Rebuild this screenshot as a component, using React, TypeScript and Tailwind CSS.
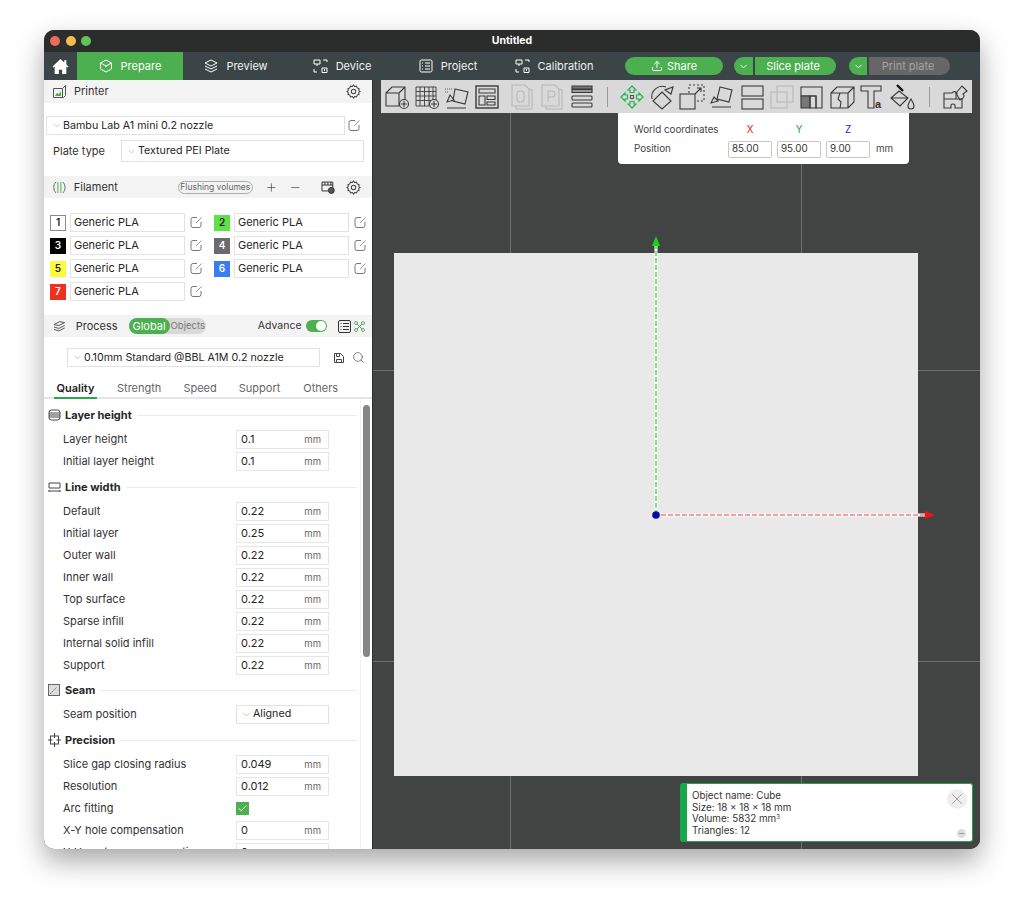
import React from 'react';
import { Search, Plus, Minus, ChevronDown, Upload, Check, X } from 'lucide-react';

const EditIcon = () => (
  <svg width="13" height="13" viewBox="0 0 13 13" fill="none" stroke="#777" strokeWidth="1" className="shrink-0">
    <path d="M7 1.5H3a2 2 0 0 0-2 2v6a2 2 0 0 0 2 2h6a2 2 0 0 0 2-2V6" />
    <path d="M6 7l5.5-5.5" stroke="#999" />
  </svg>
);

const GearIcon = () => (
  <svg width="15" height="15" viewBox="0 0 16 16" fill="none" stroke="#444" strokeWidth="1.1" className="shrink-0">
    <path d="M8 1l1.2 1.6 2-.3.8 1.9 1.9.8-.3 2L15 8l-1.4 1 .3 2-1.9.8-.8 1.9-2-.3L8 15l-1.2-1.6-2 .3-.8-1.9-1.9-.8.3-2L1 8l1.4-1-.3-2L4 4.2l.8-1.9 2 .3z" />
    <circle cx="8" cy="8" r="2.3" />
  </svg>
);

const Dropdown = ({ text, className }: { text: string; className: string }) => (
  <div className={`flex items-center border border-[#e2e2e2] bg-white text-[#262626] text-[10.7px] ${className}`}>
    <ChevronDown size={11} strokeWidth={1} color="#888" className="ml-[4px] mr-[1px] shrink-0" />
    <span className="pt-[1px]">{text}</span>
  </div>
);

const PanelHeader = ({ className, children }: { className?: string; children: React.ReactNode }) => (
  <div className={`flex items-center bg-[#f3f3f3] ${className ?? ''}`}>{children}</div>
);

const Filament = ({ n, swatch }: { n: number; swatch: string }) => (
  <div className="flex items-center w-[164px] h-[19px]">
    <div className={`w-[16px] h-[16px] flex items-center justify-center text-[10px] font-semibold shrink-0 ${swatch}`}>{n}</div>
    <div className="ml-[4px] w-[115px] h-[19px] border border-[#e2e2e2] flex items-center pl-[3px] text-[#262626]">Generic PLA</div>
    <div className="ml-[5px]"><EditIcon /></div>
  </div>
);

const Row = ({ label, value }: { label: string; value: string }) => (
  <div className="flex items-center h-[22px] pl-[19px] text-[#333]">
    <span className="w-[173px]">{label}</span>
    <div className="w-[93px] h-[19px] border border-[#e6e6e6] flex items-center justify-between pl-[4px] pr-[7px] text-[#262626]">
      <span>{value}</span>
      <span className="text-[9.5px] text-[#666] mt-[2px]">mm</span>
    </div>
  </div>
);

const Section = ({ icon, title, className }: { icon: React.ReactNode; title: string; className?: string }) => (
  <div className={`flex items-center h-[22px] pl-[4px] pr-[15px] ${className ?? ''}`}>
    <span className="w-[17px] shrink-0 flex">{icon}</span>
    <span className="font-bold text-[#262626]">{title}</span>
    <div className="flex-1 h-px bg-[#ececec] ml-[5px]" />
  </div>
);

const LayerIcon = () => (
  <svg width="13" height="12" viewBox="0 0 13 12" fill="none" stroke="#444" strokeWidth="1">
    <rect x="1" y="1" width="11" height="10" rx="2.5" />
    <path d="M1 4h11M1 6h11M1 8h11" />
  </svg>
);
const LineIcon = () => (
  <svg width="13" height="12" viewBox="0 0 13 12" fill="none" stroke="#444" strokeWidth="1">
    <path d="M1 2h11M1 7h11M1 2v5M12 2v5M1 9v2M12 9v2M1 10h11" />
  </svg>
);
const SeamIcon = () => (
  <svg width="12" height="12" viewBox="0 0 12 12" fill="#ddd" stroke="#666" strokeWidth="1">
    <rect x="0.5" y="0.5" width="11" height="11" />
    <path d="M2 10l7-7" strokeDasharray="1.5 1" />
  </svg>
);
const PrecisionIcon = () => (
  <svg width="13" height="14" viewBox="0 0 13 14" fill="none" stroke="#444" strokeWidth="1">
    <rect x="2.5" y="3" width="8" height="8" />
    <path d="M6.5 0v5M6.5 9v5M0 7h4.500M8.500 7H13" />
  </svg>
);

const ToolIcon = ({ className, faded, children }: { className?: string; faded?: boolean; children: React.ReactNode }) => (
  <div className={`w-[30px] h-[33px] flex items-center justify-center shrink-0 ${faded ? 'opacity-20' : ''} ${className ?? ''}`}>
    <svg width="26" height="26" viewBox="0 0 26 26" fill="none" stroke="#3a3a3a" strokeWidth="1.1">{children}</svg>
  </div>
);

const PlusBadge = ({ x, y }: { x: number; y: number }) => (
  <g>
    <circle cx={x} cy={y} r="4.5" fill="#d8d9d8" />
    <path d={`M${x - 3} ${y}h6M${x} ${y - 3}v6`} />
  </g>
);

const Toolbar = () => (
  <div className="flex items-center h-[33px] mx-[8px] bg-[#d8d9d8] pl-[1px]">
    <ToolIcon>
      <path d="M2 9l6-6h13v13l-6 6H2zM2 9h13v13M15 9l6-6" />
      <PlusBadge x={20} y={20} />
    </ToolIcon>
    <ToolIcon>
      <path d="M2 3h20v19H2zM2 7.500h20M2 12h20M2 16.500h20M6 3v19M10.500 3v19M15 3v19M19 3v19" strokeWidth="0.9" />
      <PlusBadge x={20} y={20} />
    </ToolIcon>
    <ToolIcon>
      <path d="M11 5l13 3-3 12-12-3zM3 24h19M6 11l-3 7 7-2z" />
      <path d="M1 5h7M1 8h4" strokeWidth="0.800" strokeDasharray="1 1" />
    </ToolIcon>
    <ToolIcon>
      <rect x="2" y="2" width="22" height="22" strokeWidth="1.400" />
      <path d="M5 5h16v4H5zM5 12h6v9H5zM13 12h8v3.500h-8zM13 18h8v3h-8z" />
    </ToolIcon>
    <ToolIcon className="ml-[5px]" faded>
      <path d="M3 1h13l4 4v17H3zM7 22v3h16V6l-3-1" />
      <rect x="8" y="7" width="7" height="11" rx="3" />
    </ToolIcon>
    <ToolIcon faded>
      <path d="M3 1h13l4 4v17H3zM7 22v3h16V6l-3-1" />
      <path d="M9 18V7h4a3 3 0 0 1 0 6H9" />
    </ToolIcon>
    <ToolIcon>
      <path d="M3 2h20v3H3z" fill="#777" />
      <path d="M3 5.500h20v3H3z" fill="#999" />
      <rect x="3" y="12" width="20" height="4" rx="1" />
      <rect x="3" y="19" width="20" height="4" rx="1" />
    </ToolIcon>
    <div className="w-[1px] h-[20px] bg-[#999] ml-[10px] mr-[9px]" />
    <ToolIcon>
      <g stroke="#1fb84f" strokeWidth="1.200">
        <path d="M13 2l4 4h-2v2.500h-4V6H9zM13 24l4-4h-2v-2.500h-4V20H9zM2 13l4-4v2h2.500v4H6v2zM24 13l-4-4v2h-2.500v4H20v2z" />
      </g>
      <rect x="11.500" y="11.500" width="3" height="3" stroke="#555" />
    </ToolIcon>
    <ToolIcon>
      <path d="M3 15A10.500 10.500 0 0 1 17 3" />
      <path d="M24 3l-2 7-6-4zM13 8l9 9-9 8-9-8z" />
    </ToolIcon>
    <ToolIcon>
      <path d="M10 9V1h15v16h-8" strokeDasharray="2 2" />
      <rect x="1" y="10" width="15" height="15" />
      <path d="M16 10l6-6M18 4h4v4" />
    </ToolIcon>
    <ToolIcon>
      <path d="M11 3l12 3-3 12-12-3zM3 23h19M5 13l-3 6 7-2z" />
    </ToolIcon>
    <ToolIcon>
      <rect x="3" y="2" width="21" height="10" />
      <rect x="3" y="15" width="21" height="10" />
    </ToolIcon>
    <ToolIcon faded>
      <rect x="2" y="8" width="16" height="16" />
      <rect x="8" y="2" width="16" height="16" />
    </ToolIcon>
    <ToolIcon>
      <path d="M2 3h21v21h-6V12H2z" />
      <path d="M2 12h9v12H2z" fill="#777" />
      <path d="M11 12h6v12h-6z" />
    </ToolIcon>
    <ToolIcon>
      <path d="M2 9l6-6h17v15l-6 6H2zM2 9h17v15M19 9l6-6M11 9l-2 6 3 3-1 6" />
    </ToolIcon>
    <ToolIcon>
      <path d="M2 2h20v5h-7v17H9V7H2z" />
      <text x="16" y="24" fontSize="11" fontWeight="700" fill="#333" stroke="none" fontFamily="Liberation Sans">a</text>
    </ToolIcon>
    <ToolIcon>
      <path d="M2 14l8-7 9 7-8 8zM2 14h17" />
      <path d="M8 1l6 6" strokeWidth="2.400" stroke="#111" />
      <path d="M22 15c-2 4-3 5-3 7a3 3 0 0 0 6 0c0-2-1-3-3-7z" />
    </ToolIcon>
    <div className="w-[1px] h-[20px] bg-[#999] ml-[12px] mr-[10px]" />
    <ToolIcon>
      <path d="M2 9h8a3 3 0 0 1 5 0h-1v6H2zM2 15v9h7v-3a2.500 2.500 0 0 1 4 0v3h7v-9h-6" />
      <path d="M14 9l6-7 5 5-4 3a2.500 2.500 0 0 1 0 4l-3 2z" />
    </ToolIcon>
  </div>
);

const Coord = ({ value }: { value: string }) => (
  <div className="h-[17px] border border-[#c8c8c8] rounded-[2px] flex items-center pl-[3px] text-[#333]">{value}</div>
);

const Tab = ({ label, active, icon }: { label: string; active?: boolean; icon: React.ReactNode }) => (
  <div className={`w-[106px] h-full flex items-center justify-center gap-[8px] text-[#f2f2f2] ${active ? 'bg-[#4caf50] text-white' : ''}`}>
    {icon}
    <span>{label}</span>
  </div>
);

const BoxIcon = () => (
  <svg width="14" height="14" viewBox="0 0 14 14" fill="none" stroke="#fff" strokeWidth="1">
    <path d="M7 1l5.500 3v6L7 13l-5.500-3V4zM1.500 4L7 7l5.500-3M7 7v1" />
  </svg>
);
const StackIcon = () => (
  <svg width="14" height="14" viewBox="0 0 14 14" fill="none" stroke="#fff" strokeWidth="1">
    <path d="M7 1l6 3-6 3-6-3zM1 7l6 3 6-3M1 10l6 3 6-3" />
  </svg>
);
const DeviceIcon = () => (
  <svg width="15" height="14" viewBox="0 0 15 14" fill="none" stroke="#fff" strokeWidth="1">
    <path d="M1 1h6v4H1zM4 5v2M10 1h4v2M1 10v3h3M9 9h5v4.500H9zM11.500 10v2" />
  </svg>
);
const ListIcon = () => (
  <svg width="14" height="14" viewBox="0 0 14 14" fill="none" stroke="#fff" strokeWidth="1">
    <rect x="1" y="1" width="12" height="12" rx="1.500" />
    <path d="M3 4h1M6 4h5M3 7h1M6 7h5M3 10h1M6 10h5" />
  </svg>
);

const MainBar = () => (
  <div className="h-[28px] bg-[#3b4446] flex items-center">
    <div className="w-[33px] flex justify-center">
      <svg width="17" height="17" viewBox="0 0 16 16" fill="#fff"><path d="M8 1L0.500 8l1 1 1-.9V15h4v-4h3v4h4V8.100l1 .9 1-1-2-1.900V2h-2v2.300z" /></svg>
    </div>
    <Tab label="Prepare" active icon={<BoxIcon />} />
    <Tab label="Preview" icon={<StackIcon />} />
    <Tab label="Device" icon={<DeviceIcon />} />
    <Tab label="Project" icon={<ListIcon />} />
    <Tab label="Calibration" icon={<DeviceIcon />} />
    <div className="ml-[18px] w-[98px] h-[18px] rounded-full bg-[#4caf50] text-white flex items-center justify-center gap-[4px]">
      <Upload size={12} /> Share
    </div>
    <div className="ml-[11px] w-[19px] h-[18px] rounded-l-full bg-[#4caf50] flex items-center justify-center">
      <ChevronDown size={11} color="#fff" />
    </div>
    <div className="ml-[2px] w-[81px] h-[18px] rounded-r-full bg-[#4caf50] text-white flex items-center justify-center pr-[5px]">Slice plate</div>
    <div className="ml-[13px] w-[18px] h-[18px] rounded-l-full bg-[#4caf50] flex items-center justify-center">
      <ChevronDown size={11} color="#fff" />
    </div>
    <div className="ml-[2px] w-[81px] h-[18px] rounded-r-full bg-[#666] text-[#a3a3a3] flex items-center justify-center pr-[3px]">Print plate</div>
  </div>
);

const LeftPanel = () => (
  <div className="w-[328px] shrink-0 bg-white flex flex-col overflow-hidden">
    <PanelHeader className="h-[23px] pl-[9px] pr-[11px]">
      <svg width="13" height="13" viewBox="0 0 13 13" fill="none" stroke="#555"><path d="M.5 3.500h9l3-3v10l-2 2H.5zM9.500 3.500v9" /><path d="M2 11l2-3 2 1 2-3v5z" fill="#4caf50" stroke="none" /></svg>
      <span className="ml-[8px] text-[#333]">Printer</span>
      <span className="ml-auto"><GearIcon /></span>
    </PanelHeader>
    <div className="flex items-center mt-[13px] ml-[2px] h-[19px]">
      <Dropdown text="Bambu Lab A1 mini 0.2 nozzle" className="w-[299px] h-[19px]" />
      <span className="ml-[3px]"><EditIcon /></span>
    </div>
    <div className="flex items-center mt-[5px] ml-[9px] h-[22px]">
      <span className="w-[68px] text-[#333]">Plate type</span>
      <Dropdown text="Textured PEI Plate" className="w-[243px] h-[22px]" />
    </div>
    <PanelHeader className="mt-[14px] h-[22px] pl-[9px] pr-[11px]">
      <svg width="13" height="13" viewBox="0 0 13 13" fill="none" stroke="#4caf50"><path d="M3 1c-3 3-3 8 0 11M10 1c3 3 3 8 0 11" stroke="#666" /><path d="M5 1v11M8 1v11" /></svg>
      <span className="ml-[8px] text-[#333]">Filament</span>
      <span className="ml-[60px] w-[76px] h-[13px] border border-[#aaa] rounded-full text-[8.500px] leading-[11px] text-center whitespace-nowrap text-[#666]">Flushing volumes</span>
      <Plus size={13} color="#333" strokeWidth={1.200} className="ml-[12px]" />
      <Minus size={13} color="#333" strokeWidth={1.200} className="ml-[12px]" />
      <svg width="14" height="14" viewBox="0 0 14 14" fill="none" stroke="#333" className="ml-[19px]"><path d="M1 2h11v9H1zM1 5h11M4 2v3M7 2v3M10 2v3" /><circle cx="10.500" cy="10.500" r="3" fill="#555" /></svg>
      <span className="ml-[11px]"><GearIcon /></span>
    </PanelHeader>
    <div className="mt-[15px] ml-[6px] grid grid-cols-[164px_164px] gap-y-[4px]">
      <Filament n={1} swatch="border border-[#888] text-[#222] bg-white" />
      <Filament n={2} swatch="bg-[#5de04a] text-[#222]" />
      <Filament n={3} swatch="bg-black text-white" />
      <Filament n={4} swatch="bg-[#6b6b6b] text-white" />
      <Filament n={5} swatch="bg-[#fbfb3d] text-[#222]" />
      <Filament n={6} swatch="bg-[#3b7cf2] text-white" />
      <Filament n={7} swatch="bg-[#f0301e] text-white" />
    </div>
    <PanelHeader className="mt-[14px] h-[22px] pl-[9px] pr-[7px]">
      <svg width="13" height="13" viewBox="0 0 13 13" fill="none" stroke="#555"><path d="M1 4.500L7 1.500l5 1-6 3zM1 7l5 1.500 6-3M1 9.500l5 1.500 6-3" /></svg>
      <span className="ml-[10px] w-[42px] text-[#333]">Process</span>
      <div className="ml-[11px] w-[79px] h-[16px] rounded-full bg-[#d9d9d9] flex items-center text-[#777]">
        <span className="w-[41px] h-full rounded-full bg-[#4caf50] text-white flex items-center justify-center">Global</span>
        <span className="ml-[1px] text-[9.500px]">Objects</span>
      </div>
      <span className="ml-[52px] w-[45px] text-right text-[10.500px] text-[#333]">Advance</span>
      <div className="ml-[4px] w-[22px] h-[12px] rounded-full bg-[#4caf50] flex items-center justify-end pr-[1px]">
        <div className="w-[10px] h-[10px] rounded-full bg-white" />
      </div>
      <span className="ml-[11px]"><svg width="13" height="13" viewBox="0 0 13 13" fill="none" stroke="#333"><rect x=".5" y=".5" width="12" height="12" rx="1.500" /><path d="M2.500 3.500h1M5 3.500h6M2.500 6.500h1M5 6.500h6M2.500 9.500h1M5 9.500h6" /></svg></span>
      <span className="ml-[3px]"><svg width="11" height="11" viewBox="0 0 11 11" fill="none" stroke="#5bb56a"><circle cx="2" cy="2" r="1.500" /><circle cx="9" cy="2" r="1.500" /><circle cx="2" cy="9" r="1.500" /><circle cx="9" cy="9" r="1.500" /><path d="M3 3l5 5M8 3L3 8" stroke="#888" /></svg></span>
    </PanelHeader>
    <div className="flex items-center mt-[11px] ml-[23px] h-[19px]">
      <Dropdown text="0.10mm Standard @BBL A1M 0.2 nozzle" className="w-[253px] h-[19px]" />
      <svg width="12" height="12" viewBox="0 0 12 12" fill="none" stroke="#444" className="ml-[13px]"><path d="M1.500 1.500h6l3 3v6h-9zM3.500 1.500v3h3v-3M3.500 10.500v-3h5v3" /></svg>
      <Search size={13} color="#444" strokeWidth={1.200} className="ml-[7px]" />
    </div>
    <div className="flex mt-[12px] h-[20px] pt-[1px] border-b-2 border-[#e6e6e6] pl-[10px] text-[#666]">
      <span className="w-[43px] h-[19px] border-b-2 border-[#2da84a] text-center font-semibold text-[#222]">Quality</span>
      <span className="ml-[20px]">Strength</span>
      <span className="ml-[22px]">Speed</span>
      <span className="ml-[22px]">Support</span>
      <span className="ml-[23px]">Others</span>
    </div>
    <div className="relative flex-1 min-h-0 overflow-hidden pt-[5px]">
      <Section icon={<LayerIcon />} title="Layer height" />
      <div className="mt-[2px]">
        <Row label="Layer height" value="0.1" />
        <Row label="Initial layer height" value="0.1" />
      </div>
      <Section icon={<LineIcon />} title="Line width" className="mt-[4px]" />
      <div className="mt-[2px]">
        <Row label="Default" value="0.22" />
        <Row label="Initial layer" value="0.25" />
        <Row label="Outer wall" value="0.22" />
        <Row label="Inner wall" value="0.22" />
        <Row label="Top surface" value="0.22" />
        <Row label="Sparse infill" value="0.22" />
        <Row label="Internal solid infill" value="0.22" />
        <Row label="Support" value="0.22" />
      </div>
      <Section icon={<SeamIcon />} title="Seam" className="mt-[3px]" />
      <div className="mt-[2px] flex items-center h-[22px] pl-[19px] text-[#333]">
        <span className="w-[173px]">Seam position</span>
        <Dropdown text="Aligned" className="w-[93px] h-[19px]" />
      </div>
      <Section icon={<PrecisionIcon />} title="Precision" className="mt-[4px]" />
      <div className="mt-[2px]">
        <Row label="Slice gap closing radius" value="0.049" />
        <Row label="Resolution" value="0.012" />
        <div className="flex items-center h-[22px] pl-[19px] text-[#333]">
          <span className="w-[173px]">Arc fitting</span>
          <div className="w-[13px] h-[13px] bg-[#4caf50] flex items-center justify-center"><Check size={11} color="#fff" /></div>
        </div>
        <Row label="X-Y hole compensation" value="0" />
        <Row label="X-Y contour compensation" value="0" />
      </div>
      <div className="absolute right-[2px] top-[6px] w-[7px] h-[252px] rounded-full bg-[#868686]" />
      <div className="absolute right-[11px] top-0 bottom-0 w-px bg-[#f0f0f0]" />
    </div>
  </div>
);

const Canvas = () => (
  <div className="relative flex-1 ml-px bg-[#424443] overflow-hidden">
    <div className="absolute left-[137px] top-0 bottom-0 w-px bg-[#6e706f]" />
    <div className="absolute left-[428px] top-0 bottom-0 w-px bg-[#6e706f]" />
    <div className="absolute left-0 right-0 top-[290px] h-px bg-[#6e706f]" />
    <div className="absolute left-0 right-0 top-[581px] h-px bg-[#6e706f]" />
    <div className="absolute left-[21px] top-[173px] w-[524px] h-[523px] bg-[#e9e9e9]" />
    <svg className="absolute left-[270px] top-[150px]" width="300" height="295" viewBox="0 0 300 295" fill="none">
      <path d="M13 285V16" stroke="#fff" strokeWidth="3" />
      <path d="M13 285V16" stroke="#4fe04f" strokeWidth="1.500" strokeDasharray="5 2" />
      <path d="M13 6l-4 10h8z" fill="#12d412" />
      <path d="M18 285H284" stroke="#fff" strokeWidth="3" />
      <path d="M18 285H284" stroke="#f08080" strokeWidth="1.500" strokeDasharray="5 2" />
      <path d="M292 285l-10-4v8z" fill="#f01414" />
      <circle cx="13" cy="285" r="3.800" fill="#0a0aa8" />
    </svg>
    <div className="relative">
      <Toolbar />
    </div>
    <div className="absolute left-[245px] top-[33px] w-[291px] h-[51px] bg-white rounded-b-[4px] pl-[16px] pt-[10px] text-[#444] text-[9.800px]">
      <div className="grid grid-cols-[89px_44px_44px_44px_auto] gap-x-[5px] items-center">
        <span>World coordinates</span>
        <span className="text-center text-[#f01414]">X</span>
        <span className="text-center text-[#18a84a]">Y</span>
        <span className="text-center text-[#2020e0]">Z</span>
        <span />
        <span className="mt-[3px]">Position</span>
        <div className="mt-[3px]"><Coord value="85.00" /></div>
        <div className="mt-[3px]"><Coord value="95.00" /></div>
        <div className="mt-[3px]"><Coord value="9.00" /></div>
        <span className="mt-[3px] ml-[1px]">mm</span>
      </div>
    </div>
    <div className="absolute left-[307px] top-[703px] w-[293px] h-[59px] bg-white rounded-[3px] border border-[#1aa64a] border-l-[7px] pl-[5px] pt-[6px] text-[9.800px] leading-[11.700px] text-[#333]">
      <div>Object name: Cube</div>
      <div>Size: 18 x 18 x 18 mm</div>
      <div>Volume: 5832 mm<sup className="text-[6px]">3</sup></div>
      <div>Triangles: 12</div>
      <div className="absolute right-[5px] top-[5px] w-[20px] h-[20px] rounded-full bg-[#eeeeee] flex items-center justify-center">
        <X size={18} color="#999" strokeWidth={1.200} />
      </div>
      <div className="absolute right-[6px] bottom-[3px] w-[9px] h-[9px] rounded-full bg-[#ddd] flex items-center justify-center">
        <div className="w-[5px] h-px bg-[#999]" />
      </div>
    </div>
  </div>
);

export default function App() {
  return (
    <div className="w-[1024px] h-[907px] bg-white pt-[30px] pl-[44px] font-['Inter','Liberation_Sans',sans-serif] text-[11px]">
      <div className="w-[936px] h-[819px] rounded-[10px] overflow-hidden bg-[#2d2e2e] flex flex-col shadow-[0_12px_28px_rgba(0,0,0,0.35)]">
        <div className="h-[22px] relative flex items-center justify-center bg-[#2b2c2c] text-white text-[10.500px] font-bold">
          <div className="absolute left-[6px] flex gap-[5.500px]">
            <div className="w-[10px] h-[10px] rounded-full bg-[#ee6a5f]" />
            <div className="w-[10px] h-[10px] rounded-full bg-[#f5bd4f]" />
            <div className="w-[10px] h-[10px] rounded-full bg-[#61c454]" />
          </div>
          Untitled
        </div>
        <MainBar />
        <div className="flex-1 min-h-0 flex">
          <LeftPanel />
          <Canvas />
        </div>
      </div>
    </div>
  );
}
